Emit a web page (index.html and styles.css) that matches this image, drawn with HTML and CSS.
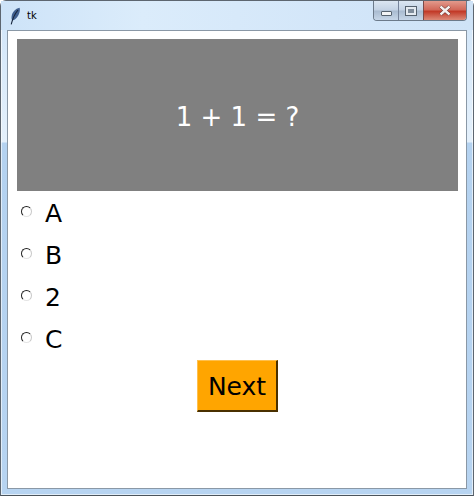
FILE: index.html
```html
<!DOCTYPE html>
<html lang="en">
<head>
<meta charset="utf-8">
<title>tk</title>
<link rel="stylesheet" href="styles.css">
</head>
<body>
<div class="window">
  <header class="titlebar">
    <svg class="feather" width="12" height="18" viewBox="0 0 12 18" aria-hidden="true">
      <path d="M10.5 0.8C6.5 1.6 3.2 5 2.6 9.4C2.3 11.6 2.8 13 3.6 13.6C6.8 12.6 9.6 9 10.6 5C11 3.4 11 1.8 10.5 0.8Z" fill="#3f5f8f"/>
      <path d="M9 3C6.5 6 4 10 2.2 17.4" fill="none" stroke="#16233a" stroke-width="1.1"/>
    </svg>
    <span class="title">tk</span>
    <div class="controls">
      <div class="ctl ctl-min"><span class="min-glyph"></span></div>
      <div class="ctl ctl-max"><span class="max-glyph"></span></div>
      <div class="ctl-close">
        <svg width="14" height="11" viewBox="0 0 14 11" aria-hidden="true">
          <path d="M2.5 1.5L11.5 9.5M11.5 1.5L2.5 9.5" stroke="#5a2a25" stroke-width="3.6" fill="none"/>
          <path d="M2.5 1.5L11.5 9.5M11.5 1.5L2.5 9.5" stroke="#f4f0ee" stroke-width="2.4" fill="none"/>
        </svg>
      </div>
    </div>
  </header>
  <main class="client">
    <div class="question">1 + 1 = ?</div>
    <label class="option"><span class="radio"></span><span class="label">A</span></label>
    <label class="option"><span class="radio"></span><span class="label">B</span></label>
    <label class="option"><span class="radio"></span><span class="label">2</span></label>
    <label class="option"><span class="radio"></span><span class="label">C</span></label>
    <div class="actions"><button class="next" type="button">Next</button></div>
  </main>
</div>
</body>
</html>
```
FILE: styles.css
```css
html, body {
  margin: 0;
  padding: 0;
}
body {
  width: 474px;
  height: 496px;
  overflow: hidden;
  font-family: "DejaVu Sans", sans-serif;
  background: #fff;
}
.window {
  box-sizing: border-box;
  width: 474px;
  height: 496px;
  display: flex;
  flex-direction: column;
  border: 1px solid #5d6670;
  border-bottom-color: #4b545c;
  border-radius: 6px 6px 0 0;
  background: linear-gradient(to bottom, #cfe4f8 0, #d9eafa 60px, #e4f0fb 141px, #b4d2f0 142px, #b7d4f1 100%);
  box-shadow: inset 0 0 0 1px rgba(255, 255, 255, .6);
}
.titlebar {
  height: 29px;
  flex: none;
  display: flex;
  align-items: center;
  padding-left: 8px;
  background: linear-gradient(to right, #cde3f8, #dbecfb 30%, #d3e6f9 70%, #cfe3f7);
}
.feather {
  margin-right: 6px;
}
.title {
  font-size: 10px;
  color: #000;
}
.controls {
  margin-left: auto;
  margin-right: 6px;
  align-self: flex-start;
  display: flex;
  height: 19px;
  border: 1px solid #6c7a8a;
  border-top: 0;
  border-radius: 0 0 4px 4px;
  overflow: hidden;
}
.ctl {
  display: flex;
  align-items: center;
  justify-content: center;
  background: linear-gradient(to bottom, #dbe6f2, #c3d2e4 48%, #a9bbd0 52%, #c6d6e8);
}
.ctl-min {
  width: 24px;
  border-right: 1px solid #75839a;
}
.ctl-max {
  width: 24px;
}
.min-glyph {
  width: 9px;
  height: 3px;
  margin-top: 5px;
  background: #f2f4f6;
  border: 1px solid #56626f;
  border-radius: 1px;
}
.max-glyph {
  box-sizing: border-box;
  width: 10px;
  height: 8px;
  border: 2px solid #e4eaf0;
  outline: 1px solid #56626f;
  background: #7f8c9a;
}
.ctl-close {
  width: 42px;
  display: flex;
  align-items: center;
  justify-content: center;
  border-left: 1px solid #7a4a48;
  background: linear-gradient(to bottom, #e29a8c, #d2695a 45%, #c23a28 55%, #dc8a78);
}
.client {
  flex: 1;
  box-sizing: border-box;
  margin: 0 6px 6px;
  padding: 8px 8px 0 9px;
  display: flex;
  flex-direction: column;
  background: #fff;
  border: 1px solid #8a98a6;
}
.question {
  box-sizing: border-box;
  height: 152px;
  flex: none;
  display: flex;
  align-items: center;
  justify-content: center;
  padding-top: 3px;
  background: #808080;
  color: #fff;
  font-size: 26px;
}
.option {
  height: 42px;
  flex: none;
  display: flex;
  align-items: center;
  padding-left: 4px;
}
.radio {
  box-sizing: border-box;
  width: 11px;
  height: 11px;
  margin-bottom: 2px;
  border-radius: 50%;
  border: 1px solid;
  border-color: #222 #c8c8c8 #e4e4e4 #222;
  background: #fff;
  margin-right: 13px;
}
.label {
  padding-top: 2px;
  font-size: 25px;
  color: #000;
}
.actions {
  display: flex;
  justify-content: center;
  margin-top: 1px;
}
.next {
  box-sizing: border-box;
  width: 81px;
  height: 52px;
  padding: 1px 0 0;
  font-family: inherit;
  font-size: 25px;
  color: #000;
  background: #ffa500;
  border: 1px solid;
  border-color: #ffc04d #4a3000 #4a3000 #ffc04d;
  border-width: 1px 2px 2px 1px;
}
```
